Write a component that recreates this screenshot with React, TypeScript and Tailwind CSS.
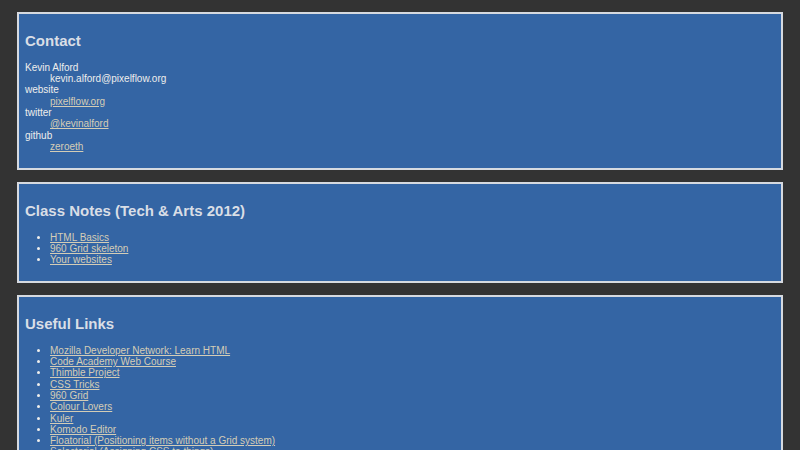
const contact = [
  { label: "Kevin Alford", value: "kevin.alford@pixelflow.org", link: false },
  { label: "website", value: "pixelflow.org", link: true },
  { label: "twitter", value: "@kevinalford", link: true },
  { label: "github", value: "zeroeth", link: true },
];

const classNotes = ["HTML Basics", "960 Grid skeleton", "Your websites"];

const usefulLinks = [
  "Mozilla Developer Network: Learn HTML",
  "Code Academy Web Course",
  "Thimble Project",
  "CSS Tricks",
  "960 Grid",
  "Colour Lovers",
  "Kuler",
  "Komodo Editor",
  "Floatorial (Positioning items without a Grid system)",
  "Selectorial (Assigning CSS to things)",
];

const Section = ({ title, children }: { title: string; children: React.ReactNode }) => (
  <section className="border-2 border-[#d6dae0] bg-[#3465a4] px-[6px] py-[6px]">
    <h2 className="my-[12.3px] text-[15px] font-bold leading-[17.25px] text-[#d9dee6]">{title}</h2>
    {children}
  </section>
);

const LinkList = ({ items }: { items: string[] }) => (
  <ul className="mb-[10px] list-disc pl-[25px] marker:text-[#eeeeec]">
    {items.map((item) => (
      <li key={item}>
        <a href="#" className="text-[#d4cdb6] underline">
          {item}
        </a>
      </li>
    ))}
  </ul>
);

export default function App() {
  return (
    <div className="h-[450px] overflow-hidden bg-[#333333] pt-[12px] font-['Liberation_Sans',Arial,sans-serif] text-[10px] leading-[11.3px] text-[#eeeeec]">
      <div className="ml-[17px] mr-[17px] flex flex-col gap-[11.5px]">
        <Section title="Contact">
          <dl className="mb-[10px]">
            {contact.map((c) => (
              <div key={c.label}>
                <dt>{c.label}</dt>
                <dd className="ml-[25px]">
                  {c.link ? (
                    <a href="#" className="text-[#d4cdb6] underline">
                      {c.value}
                    </a>
                  ) : (
                    c.value
                  )}
                </dd>
              </div>
            ))}
          </dl>
        </Section>
        <Section title="Class Notes (Tech & Arts 2012)">
          <LinkList items={classNotes} />
        </Section>
        <Section title="Useful Links">
          <LinkList items={usefulLinks} />
        </Section>
      </div>
    </div>
  );
}
